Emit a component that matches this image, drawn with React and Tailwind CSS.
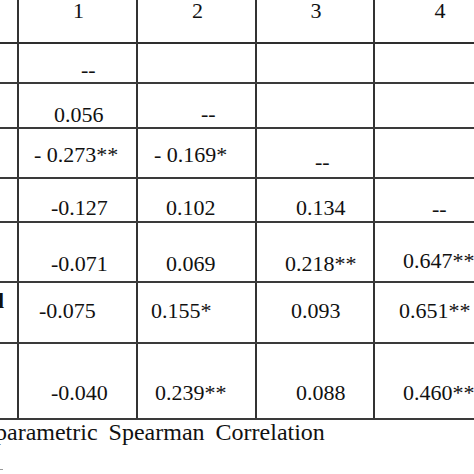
import React from "react";

const rows = [
  {
    h: "h-[40px]",
    cells: [
      { t: "--", c: "pl-[62px] pb-[1px]" },
      { t: "", c: "" },
      { t: "", c: "" },
      { t: "", c: "" },
    ],
  },
  {
    h: "h-[45px]",
    cells: [
      { t: "0.056", c: "pl-[35px] pb-[1px]" },
      { t: "--", c: "pl-[63px] pb-[2px]" },
      { t: "", c: "" },
      { t: "", c: "" },
    ],
  },
  {
    h: "h-[50px]",
    cells: [
      { t: "- 0.273**", c: "pl-[15px] pb-[11px]" },
      { t: "- 0.169*", c: "pl-[16px] pb-[11px]" },
      { t: "--", c: "pl-[58px] pb-[4px]" },
      { t: "", c: "" },
    ],
  },
  {
    h: "h-[44px]",
    cells: [
      { t: "-0.127", c: "pl-[32px] pb-[2px]" },
      { t: "0.102", c: "pl-[28px] pb-[2px]" },
      { t: "0.134", c: "pl-[39px] pb-[2px]" },
      { t: "--", c: "pl-[57px] pb-[1px]" },
    ],
  },
  {
    h: "h-[60px]",
    cells: [
      { t: "-0.071", c: "pl-[32px] pb-[6px]" },
      { t: "0.069", c: "pl-[28px] pb-[6px]" },
      { t: "0.218**", c: "pl-[28px] pb-[6px]" },
      { t: "0.647**", c: "pl-[28px] pb-[9px]" },
    ],
  },
  {
    h: "h-[61px]",
    label: true,
    cells: [
      { t: "-0.075", c: "pl-[20px] pb-[20px]" },
      { t: "0.155*", c: "pl-[13px] pb-[20px]" },
      { t: "0.093", c: "pl-[34px] pb-[20px]" },
      { t: "0.651**", c: "pl-[24px] pb-[20px]" },
    ],
  },
  {
    h: "h-[76px]",
    cells: [
      { t: "-0.040", c: "pl-[32px] pb-[14px]" },
      { t: "0.239**", c: "pl-[17px] pb-[14px]" },
      { t: "0.088", c: "pl-[39px] pb-[14px]" },
      { t: "0.460**", c: "pl-[28px] pb-[14px]" },
    ],
  },
];

const grid = "grid grid-cols-[17px_119px_119px_118px_130px]";

export default function App() {
  return (
    <div className="w-[474px] h-[474px] overflow-hidden bg-white text-[#111] font-['Liberation_Serif','Times_New_Roman',serif]">
      <div className="w-[503px]">
        <div className={`${grid} h-[44px] border-b-2 border-[#2e2e2e] text-[22px] leading-none`}>
          <div />
          {["1", "2", "3", "4"].map((n) => (
            <div
              key={n}
              className="flex items-end justify-center pb-[25px] pl-[2px] border-l-2 border-[#333]"
            >
              {n}
            </div>
          ))}
        </div>
        {rows.map((r, i) => (
          <div
            key={i}
            className={`${grid} ${r.h} border-b-2 border-[#3a3a3a] text-[22px] leading-none`}
          >
            <div className="flex items-end overflow-hidden pb-[30px]">
              {r.label ? (
                <span className="font-bold -ml-[2px]">l</span>
              ) : null}
            </div>
            {r.cells.map((c, j) => (
              <div
                key={j}
                className={`flex items-end whitespace-nowrap border-l-2 border-[#333] ${c.c}`}
              >
                {c.t}
              </div>
            ))}
          </div>
        ))}
        <div className="-ml-[5px] text-[24px] leading-none whitespace-nowrap [word-spacing:5px]">
          parametric Spearman Correlation
        </div>
        <div className="mt-[25px] w-[3px] h-[1px] bg-[#999]" />
      </div>
    </div>
  );
}
